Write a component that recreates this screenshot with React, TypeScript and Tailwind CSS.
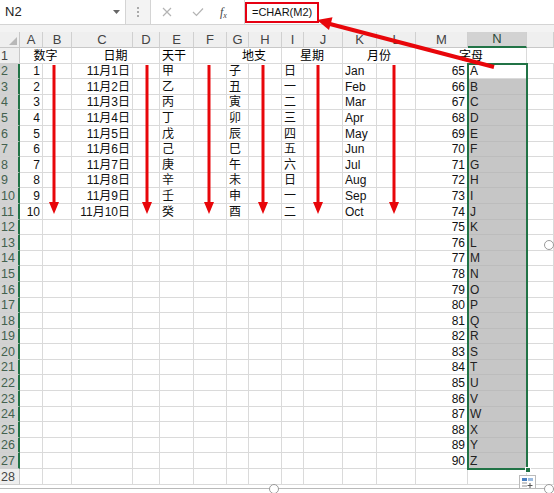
import * as React from "react";

const cols = [
  { id: "A", w: "w-[23px]" },
  { id: "B", w: "w-[29px]" },
  { id: "C", w: "w-[61px]" },
  { id: "D", w: "w-[27px]" },
  { id: "E", w: "w-[34px]" },
  { id: "F", w: "w-[33px]" },
  { id: "G", w: "w-[22px]" },
  { id: "H", w: "w-[33px]" },
  { id: "I", w: "w-[22px]" },
  { id: "J", w: "w-[39px]" },
  { id: "K", w: "w-[34px]" },
  { id: "L", w: "w-[39px]" },
  { id: "M", w: "w-[52px]" },
  { id: "N", w: "w-[59px]" },
  { id: "", w: "flex-1" },
];

const tiangan = "甲乙丙丁戊己庚辛壬癸".split("");
const dizhi = "子丑寅卯辰巳午未申酉".split("");
const week = "日一二三四五六日一二".split("");
const months = ["Jan", "Feb", "Mar", "Apr", "May", "Jun", "Jul", "Aug", "Sep", "Oct"];

const font = "font-['Liberation_Sans','Noto_Sans_CJK_SC',sans-serif]";

function cellText(col: string, i: number): { text: string; align: "l" | "r" } {
  const inData = i < 10;
  switch (col) {
    case "A":
      return { text: inData ? String(i + 1) : "", align: "r" };
    case "C":
      return { text: inData ? `11月${i + 1}日` : "", align: "r" };
    case "E":
      return { text: inData ? tiangan[i] : "", align: "l" };
    case "G":
      return { text: inData ? dizhi[i] : "", align: "l" };
    case "I":
      return { text: inData ? week[i] : "", align: "l" };
    case "K":
      return { text: inData ? months[i] : "", align: "l" };
    case "M":
      return { text: String(65 + i), align: "r" };
    case "N":
      return { text: String.fromCharCode(65 + i), align: "l" };
    default:
      return { text: "", align: "l" };
  }
}

function RowHeader({ n, selected }: { n: number; selected?: boolean }) {
  return (
    <div
      className={
        "w-[20px] shrink-0 h-full flex items-end pl-[1px] text-[12.5px] leading-[14px] border-b border-[#d0d0d0] " +
        (selected
          ? "bg-[#d2d2d2] text-[#43614f] border-r-2 border-r-[#217346]"
          : "bg-[#efefef] text-[#444] border-r border-r-[#c8c8c8]")
      }
    >
      {n}
    </div>
  );
}

function Arrows() {
  const xs = [54, 147, 209, 263, 318, 394];
  return (
    <svg className="absolute left-0 top-0 pointer-events-none" width="554" height="493">
      {xs.map((x) => (
        <g key={x}>
          <line x1={x} y1={65} x2={x} y2={204} stroke="#e8060a" strokeWidth={3} />
          <polygon points={`${x - 5},202 ${x + 5},202 ${x},214`} fill="#e8060a" />
        </g>
      ))}
      <line x1={494} y1={67} x2={330} y2={24} stroke="#e8060a" strokeWidth={4} />
      <polygon points="317,20 332.5,17.3 329,30" fill="#e8060a" />
    </svg>
  );
}

export default function App() {
  const rows = Array.from({ length: 27 }, (_, i) => i);

  return (
    <div className={`relative w-[554px] h-[493px] overflow-hidden bg-white text-black ${font}`}>
      {/* formula bar */}
      <div className="flex h-[25px] bg-white border-b border-[#d4d4d4]">
        <div className="w-[126px] shrink-0 flex items-center justify-between pl-[5px] pr-[5px] border-r border-[#d4d4d4]">
          <span className="text-[13px] text-[#222]">N2</span>
          <svg width="7" height="4" viewBox="0 0 7 4">
            <polygon points="0,0 7,0 3.5,4" fill="#666" />
          </svg>
        </div>
        <div className="w-[24px] shrink-0 flex flex-col items-center justify-center gap-[2px] bg-[#f3f3f3]">
          <span className="w-[2px] h-[2px] bg-[#aaa]" />
          <span className="w-[2px] h-[2px] bg-[#aaa]" />
          <span className="w-[2px] h-[2px] bg-[#aaa]" />
        </div>
        <div className="w-[94px] shrink-0 flex items-center border-l border-[#d4d4d4]">
          <svg className="ml-[11px]" width="10" height="10" viewBox="0 0 10 10">
            <path d="M1 1 L9 9 M9 1 L1 9" stroke="#b4b4b4" strokeWidth="1.2" />
          </svg>
          <svg className="ml-[20px]" width="12" height="10" viewBox="0 0 12 10">
            <path d="M1 5 L4.5 8.5 L11 1.5" stroke="#b4b4b4" strokeWidth="1.2" fill="none" />
          </svg>
          <span className="ml-[16px] text-[12px] italic font-['Liberation_Serif',serif] text-[#444]">
            f<sub className="text-[8px]">x</sub>
          </span>
        </div>
        <div className="flex-1 flex items-start pt-[2px] border-l border-[#d4d4d4]">
          <div className="h-[21px] px-[5px] flex items-center border-2 border-[#e60012] text-[11px] text-[#111]">
            =CHAR(M2)
          </div>
        </div>
      </div>
      <div className="h-[7px] bg-[#f3f3f3]" />

      {/* sheet */}
      <div className="relative h-[457px] overflow-hidden border-b border-[#b9b9b9]">
        {/* column headers */}
        <div className="flex h-[16px] bg-[#efefef]">
          <div className="w-[20px] shrink-0 relative border-r border-b border-[#c8c8c8]">
            <svg className="absolute right-[2px] bottom-[2px]" width="8" height="8" viewBox="0 0 8 8">
              <polygon points="8,0 8,8 0,8" fill="#b8b8b8" />
            </svg>
          </div>
          {cols.map((c) => (
            <div
              key={c.id + c.w}
              className={
                c.w +
                " shrink-0 flex items-end justify-center text-[13px] leading-[15px] border-r border-[#d0d0d0] " +
                (c.id === "N"
                  ? "bg-[#d2d2d2] text-[#2c4a38] border-b-2 border-b-[#217346]"
                  : "text-[#444] border-b border-b-[#c8c8c8]")
              }
            >
              {c.id}
            </div>
          ))}
        </div>

        {/* row 1 */}
        <div className="flex h-[15.6px]">
          <RowHeader n={1} />
          <div className="w-[52px] shrink-0 flex items-end justify-center text-[12px] leading-[14px] border-r border-b border-[#dadada]">
            数字
          </div>
          <div className="w-[88px] shrink-0 flex items-end justify-center text-[12px] leading-[14px] border-r border-b border-[#dadada]">
            日期
          </div>
          <div className="w-[34px] shrink-0 flex items-end pl-[2px] text-[12px] leading-[14px] border-r border-b border-[#dadada]">
            天干
          </div>
          <div className="w-[33px] shrink-0 border-r border-b border-[#dadada]" />
          <div className="w-[55px] shrink-0 flex items-end justify-center text-[12px] leading-[14px] border-r border-b border-[#dadada]">
            地支
          </div>
          <div className="w-[61px] shrink-0 flex items-end justify-center text-[12px] leading-[14px] border-r border-b border-[#dadada]">
            星期
          </div>
          <div className="w-[73px] shrink-0 flex items-end justify-center text-[12px] leading-[14px] border-r border-b border-[#dadada]">
            月份
          </div>
          <div className="w-[111px] shrink-0 flex items-end justify-center text-[12px] leading-[14px] border-r border-b border-[#dadada]">
            字母
          </div>
          <div className="flex-1 border-b border-[#dadada]" />
        </div>

        {/* rows 2..28 */}
        {rows.map((i) => (
          <div key={i} className="flex h-[15.6px]">
            <RowHeader n={i + 2} selected={i < 26} />
            {cols.map((c) => {
              const { text, align } = i < 26 ? cellText(c.id, i) : { text: "", align: "l" as const };
              const shaded = c.id === "N" && i > 0 && i < 26;
              return (
                <div
                  key={c.id + c.w}
                  className={
                    c.w +
                    " shrink-0 flex items-end px-[2px] text-[12px] leading-[14px] border-r border-b " +
                    (align === "r" ? "justify-end " : "justify-start ") +
                    (shaded ? "bg-[#c6c6c6] border-[#bcbcbc] text-[#222]" : "border-[#dadada] text-[#111]")
                  }
                >
                  {text}
                </div>
              );
            })}
          </div>
        ))}

        {/* selection N2:N27 */}
        <div className="absolute left-[467px] top-[30.6px] w-[61px] h-[407.6px] border-2 border-[#217346] pointer-events-none" />
        <div className="absolute left-[524.5px] top-[435px] w-[6px] h-[6px] bg-[#217346] border border-white" />

        {/* quick analysis */}
        <div className="absolute left-[519px] top-[443px] w-[17px] h-[15px] bg-white border border-[#bbb] flex items-center justify-center">
          <svg width="11" height="10" viewBox="0 0 11 10">
            <rect x="0" y="0" width="5" height="3" fill="#4a7fc1" />
            <rect x="6" y="0" width="5" height="3" fill="#9bbbe0" />
            <rect x="0" y="4" width="5" height="2" fill="#c9c9c9" />
            <rect x="0" y="7" width="5" height="2" fill="#c9c9c9" />
            <path d="M8 5 V10 M5.5 7.5 H10.5" stroke="#555" strokeWidth="1" />
          </svg>
        </div>
      </div>

      <Arrows />

      {/* frame handles */}
      <div className="absolute left-[544px] top-[240px] w-[10px] h-[10px] rounded-full border border-[#9a9a9a] bg-white" />
      <div className="absolute left-[269px] top-[484px] w-[10px] h-[10px] rounded-full border border-[#9a9a9a] bg-white" />
      <div className="absolute left-[544px] top-[484px] w-[10px] h-[10px] rounded-full border border-[#9a9a9a] bg-white" />
    </div>
  );
}
